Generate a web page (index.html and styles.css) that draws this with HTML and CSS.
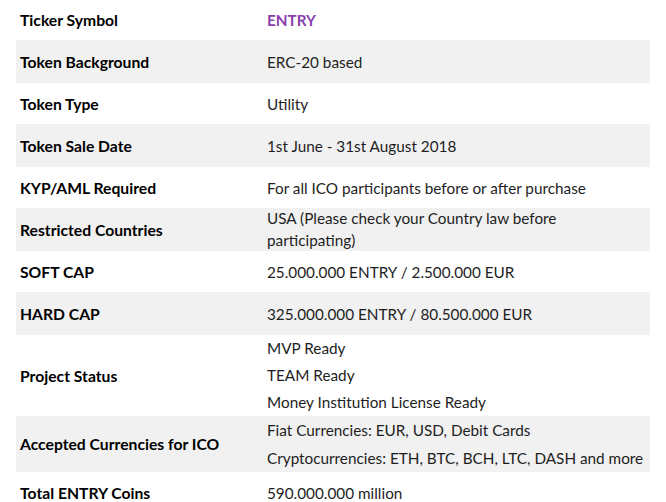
FILE: index.html
```html
<!DOCTYPE html>
<html lang="en">
<head>
<meta charset="utf-8">
<title>Token details</title>
<link rel="stylesheet" href="styles.css">
</head>
<body>
<table class="token-table">
  <tbody>
    <tr class="row row-first">
      <th class="label">Ticker Symbol</th>
      <td class="value"><span class="ticker">ENTRY</span></td>
    </tr>
    <tr class="row row-alt">
      <th class="label">Token Background</th>
      <td class="value">ERC-20 based</td>
    </tr>
    <tr class="row">
      <th class="label">Token Type</th>
      <td class="value">Utility</td>
    </tr>
    <tr class="row row-alt">
      <th class="label">Token Sale Date</th>
      <td class="value">1st June - 31st August 2018</td>
    </tr>
    <tr class="row">
      <th class="label">KYP/AML Required</th>
      <td class="value">For all ICO participants before or after purchase</td>
    </tr>
    <tr class="row row-alt">
      <th class="label">Restricted Countries</th>
      <td class="value value-wrap"><div class="wrap">USA (Please check your Country law before participating)</div></td>
    </tr>
    <tr class="row">
      <th class="label">SOFT CAP</th>
      <td class="value">25.000.000 ENTRY / 2.500.000 EUR</td>
    </tr>
    <tr class="row row-alt">
      <th class="label">HARD CAP</th>
      <td class="value">325.000.000 ENTRY / 80.500.000 EUR</td>
    </tr>
    <tr class="row row-multi">
      <th class="label">Project Status</th>
      <td class="value value-list">
        <p class="item">MVP Ready</p>
        <p class="item">TEAM Ready</p>
        <p class="item">Money Institution License Ready</p>
      </td>
    </tr>
    <tr class="row row-alt row-multi">
      <th class="label">Accepted Currencies for ICO</th>
      <td class="value value-list value-list-wide">
        <p class="item">Fiat Currencies: EUR, USD, Debit Cards</p>
        <p class="item">Cryptocurrencies: ETH, BTC, BCH, LTC, DASH and more</p>
      </td>
    </tr>
    <tr class="row">
      <th class="label">Total ENTRY Coins</th>
      <td class="value">590.000.000 million</td>
    </tr>
  </tbody>
</table>
</body>
</html>
```

FILE: styles.css
```css
html, body {
  margin: 0;
  padding: 0;
  background: #ffffff;
}

body {
  font-family: Lato, "Open Sans", "Liberation Sans", sans-serif;
  font-size: 15.3px;
  color: #1e1e1e;
}

.token-table {
  margin-left: 16px;
  width: 634px;
  border-collapse: collapse;
  border-spacing: 0;
  table-layout: fixed;
}

.row {
  height: 41px;
}

.row-first {
  height: 40px;
}

.row-alt {
  height: 43px;
  background: #f1f1f1;
}

.row-multi {
  height: auto;
}

.label {
  width: 243px;
  padding: 0 0 0 4px;
  text-align: left;
  vertical-align: middle;
  font-size: 15.7px;
  font-weight: 700;
  color: #000000;
  line-height: 22px;
}

.value {
  padding: 0 0 0 4px;
  vertical-align: middle;
  line-height: 22px;
  white-space: nowrap;
}

.value-wrap {
  white-space: normal;
}

.wrap {
  max-width: 330px;
  line-height: 21.5px;
}

.ticker {
  font-weight: 700;
  color: #8a3fae;
}

.value-list {
  padding-top: 0;
  padding-bottom: 0;
}

.item {
  margin: 0;
  line-height: 27px;
}

.value-list-wide .item {
  line-height: 28px;
}
```
